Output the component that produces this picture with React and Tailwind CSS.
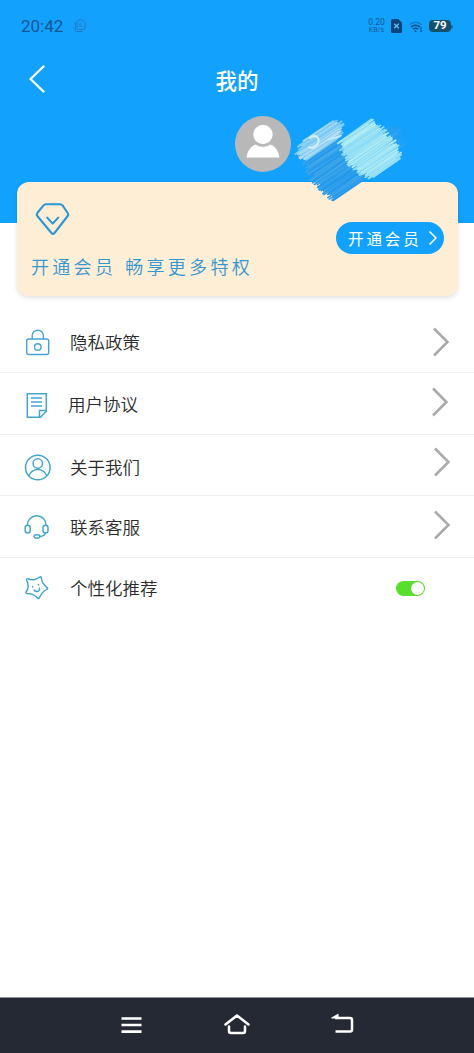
import React from "react";

const MENU = [
  { label: "隐私政策", icon: LockIcon,    row: "h-[62px] border-b", iconBox: "ml-6 mt-[2px]",      text: "mt-px",      arrow: "mr-[24px] mt-px" },
  { label: "用户协议", icon: DocIcon,     row: "h-[62px] border-b", iconBox: "ml-[22px] mt-[3px]", text: "mt-[2px]",   arrow: "mr-[25px] mb-[4px]" },
  { label: "关于我们", icon: UserIcon,    row: "h-[61px] border-b", iconBox: "ml-6 mt-[4px]",      text: "mt-[4px]",   arrow: "mr-[23px] mb-[6px]" },
  { label: "联系客服", icon: HeadsetIcon, row: "h-[62px] border-b", iconBox: "ml-6 mt-[2px]",      text: "mt-[2px]",   arrow: "mr-[23px] mb-[3px]" },
];

// Hatched brush patches: swept from one point to another, strokes run up to the right
const PATCHES = [
  { from: [320, 148], to: [350, 189], half: 23, ragged: 0.35, count: 62, colors: ["#289bea", "#36a2ea", "#2199ee", "#45a9e9", "#2b9cec"], width: 1.6 },
  { from: [381, 133], to: [393, 152], half: 12, ragged: 0.7,  count: 18, colors: ["#32a8ee", "#259fee", "#2ba4f1"], width: 1.5 },
  { from: [317, 132], to: [323, 148], half: 25, ragged: 0.3,  count: 22, colors: ["#8bd2f5", "#a6dcf5", "#7fcaf5", "#b9dff0"], width: 1.7 },
  { from: [355, 131], to: [385, 169], half: 21, ragged: 0.4,  count: 66, colors: ["#a0e5f5", "#8bdcf7", "#b3edf4", "#98e1f5"], width: 1.7 },
];

const noise = (n) => {
  const v = Math.sin(n * 127.1) * 43758.5453;
  return v - Math.floor(v);
};

export default function App() {
  return (
    <div className="relative flex h-[1053px] w-[474px] flex-col overflow-hidden bg-white font-['Noto_Sans_CJK_SC','Noto_Sans',sans-serif]">
      {/* Header */}
      <header className="h-[223px] shrink-0 bg-[#12a2fd]">
        <StatusBar />
        <div className="grid h-[56px] grid-cols-3 items-center">
          <svg className="-mt-[4px] ml-[28px]" width="18" height="30" viewBox="0 0 18 30" fill="none" stroke="#fff" strokeWidth="2.3" strokeLinecap="round" strokeLinejoin="round">
            <path d="M15.500 2.500 2.500 15l13 12.500" />
          </svg>
          <h1 className="-mt-[3px] text-center text-[21.5px] font-medium leading-8 text-white">我的</h1>
        </div>
        <div className="ml-[235px] mt-[7px] h-14 w-14 overflow-hidden rounded-full bg-[#b8b8b8]">
          <svg width="56" height="56" viewBox="0 0 56 56" fill="#fff">
            <path d="M11.500 41.500c1-7 4.500-11.400 9-13a13 13 0 0 0 15 0c4.500 1.600 8 6 9 13z" />
            <circle cx="28" cy="18.500" r="9.700" />
          </svg>
        </div>
      </header>

      {/* Membership card */}
      <section className="mx-[16.5px] -mt-[41px] flex h-[114px] shrink-0 justify-between rounded-xl bg-[#feeed6] shadow-[0_2px_5px_rgba(0,0,0,0.12)]">
        <div className="pl-[14.5px] pt-[20px]">
          <svg className="ml-1" width="36" height="34" viewBox="0 0 36 34" fill="none" stroke="#2f96d6" strokeWidth="2.1" strokeLinejoin="round" strokeLinecap="round">
            <path d="M11 2.200h14q1.600 0 2.500 1.200l5.200 7.600q1 1.500 0 3L19.500 31q-1.500 1.700-3 0L2.300 14q-1-1.500 0-3l6.200-7.600Q9.400 2.200 11 2.200z" />
            <path d="M12.200 15.600l5.500 6 5.500-6" />
          </svg>
          <p className="mt-[16px] whitespace-pre text-[18px] font-[350] leading-[28px] tracking-[3.3px] text-[#3697cf]">开通会员<span className="inline-block w-[9px]"> </span>畅享更多特权</p>
        </div>
        <button className="mr-[13.5px] mt-[40px] flex h-8 w-[108px] items-center rounded-full bg-[#12a2fd] pl-[12px] text-white">
          <span className="whitespace-nowrap text-[15.5px] leading-8 tracking-[2.9px]">开通会员</span>
          <svg className="ml-[6px] shrink-0" width="10" height="16" viewBox="0 0 10 16" fill="none" stroke="#fff" strokeWidth="1.500">
            <path d="M1.500 1.500 8 8l-6.500 6.500" />
          </svg>
        </button>
      </section>

      {/* Menu */}
      <ul className="mt-[15px] flex-1 text-[17.5px] font-[350] text-[#2b2b2b]">
        {MENU.map(({ label, icon: Icon, row, iconBox, text, arrow }) => (
          <li key={label} className={`flex items-center border-[#f0f0f0] ${row}`}>
            <span className={`flex w-[46px] shrink-0 ${iconBox}`}><Icon /></span>
            <span className={`flex-1 ${text}`}>{label}</span>
            <svg className={arrow} width="18" height="30" viewBox="0 0 18 30" fill="none" stroke="#aaa" strokeWidth="2.500">
              <path d="M2 1.500 15.500 15 2 28.500" />
            </svg>
          </li>
        ))}
        <li className="flex h-[61px] items-center">
          <span className="ml-6 flex w-[46px] shrink-0"><StarIcon /></span>
          <span className="flex-1">个性化推荐</span>
          <span className="mr-[49px] flex h-[15px] w-[29px] items-center justify-end rounded-full bg-[#58df2d] pr-px">
            <span className="h-[13px] w-[13px] rounded-full bg-white" />
          </span>
        </li>
      </ul>

      {/* System navigation */}
      <nav className="flex h-14 shrink-0 items-center justify-between border-t border-[#8f9097] bg-[#252934] px-[119px] pb-[2px]">
        <svg width="24" height="24" viewBox="0 0 24 24" fill="none" stroke="#fff" strokeWidth="2.700">
          <path d="M2.500 5.500h20M2.500 12h20M2.500 18.700h20" />
        </svg>
        <svg width="28" height="24" viewBox="0 0 28 24" fill="none" stroke="#fff" strokeWidth="2.500" strokeLinecap="round" strokeLinejoin="round">
          <path d="M2.500 11.500 14 2.500l11.500 9M6 13.500V18q0 2 2 2h12q2 0 2-2v-4.500" />
        </svg>
        <svg width="24" height="24" viewBox="0 0 24 24" fill="none" stroke="#fff" strokeWidth="2.500">
          <path d="M4 5h15q2 0 2 2v9.500q0 2-2 2H4.500" />
          <path d="M.8 5 7 1.500V5z" fill="#fff" strokeWidth="1.200" strokeLinejoin="round" />
        </svg>
      </nav>

      <Scribble />
    </div>
  );
}

function StatusBar() {
  return (
    <div className="flex h-[53px] items-center text-[#145795]">
      <span className="-mt-px ml-[21px] w-[53px] font-['Roboto',sans-serif] text-[17px] leading-5">20:42</span>
      <svg className="-mt-px" width="12" height="14" viewBox="0 0 12 14" fill="none" stroke="#2478bf" strokeWidth="1">
        <path d="M3 2.500Q3 1 4.500 1h4L11 3.500V9q0 1.500-1.500 1.500h-5Q3 10.500 3 9z" />
        <path d="M1.200 3v8q0 1.500 1.500 1.500H9" />
        <path d="M5 7h4M5 5h2" />
      </svg>
      <div className="ml-auto mr-[6px] flex w-[17px] flex-col items-center font-['Roboto',sans-serif] text-[8.5px] leading-[7.500px]">
        <div>0.20</div>
        <div className="text-[7px]">KB/s</div>
      </div>
      <svg className="-mt-px mr-[7px]" width="11" height="14" viewBox="0 0 11 14">
        <path d="M1.500 0H7l4 3.500v9q0 1.500-1.500 1.500h-8Q0 14 0 12.500v-11Q0 0 1.500 0z" fill="#0b457b" />
        <path d="M3.200 4.700l4.600 4.600m0-4.600L3.200 9.300" stroke="#6bbcf5" strokeWidth="1.300" />
      </svg>
      <svg className="mr-[6px]" width="14" height="12" viewBox="0 0 14 12" fill="none" stroke="#0d4f89">
        <path d="M.6 3.700q5.900-4.600 11.800 0" stroke="#1778c2" strokeWidth="1.300" />
        <path d="M2 6q4.500-3.500 9 0M4 8.200q2.500-1.800 5 0" strokeWidth="1.600" />
        <circle cx="6.500" cy="10.300" r="1" fill="#0d4f89" stroke="none" />
        <path d="M12 6.500v2M12 9.300v1.800" strokeWidth="1.400" />
      </svg>
      <div className="-mt-px flex h-3 w-[22px] items-center justify-center rounded-[4px] bg-[#15506f] font-['Roboto',sans-serif] text-[11.500px] font-bold text-white">79</div>
      <div className="mr-[21px] h-1 w-[2px] rounded-r bg-[#1a679a]" />
    </div>
  );
}

function Scribble() {
  return (
    <svg className="pointer-events-none absolute left-[285px] top-[110px]" width="130" height="100" viewBox="285 110 130 100" fill="none" strokeLinecap="round">
      {PATCHES.map((p, k) =>
        Array.from({ length: p.count }, (_, i) => {
          const t = i / (p.count - 1);
          const seed = i + k * 97;
          const cx = p.from[0] + (p.to[0] - p.from[0]) * t;
          const cy = p.from[1] + (p.to[1] - p.from[1]) * t;
          const taper = 0.62 + 0.28 * Math.sin(Math.PI * t);
          const a = p.half * (taper + noise(seed) * p.ragged);
          const b = p.half * (taper + noise(seed + 31) * p.ragged);
          const tilt = 0.62 + noise(seed + 53) * 0.1;
          return (
            <path
              key={`${k}-${i}`}
              d={`M${cx - a * 0.82} ${cy + a * 0.82 * tilt}L${cx + b * 0.82} ${cy - b * 0.82 * tilt}`}
              stroke={p.colors[Math.floor(noise(seed + 7) * p.colors.length)]}
              strokeWidth={p.width}
            />
          );
        })
      )}
      <path d="M310 138q5-4 8 0 2 4-2 8-4 3-7 1" stroke="#d6f1fb" strokeWidth="1.800" />
      <path d="M328 140l12-4" stroke="#c5ebfa" strokeWidth="1.500" />
    </svg>
  );
}

function LockIcon() {
  return (
    <svg width="27" height="27" viewBox="0 0 27 27" fill="none" stroke="#44a5d3" strokeWidth="1.400">
      <rect x="2.700" y="10" width="22" height="15.500" rx="2" />
      <path d="M8.200 10V6.800a5.600 5.600 0 0 1 11.200 0V10" />
      <circle cx="13.800" cy="18" r="3.300" />
    </svg>
  );
}

function DocIcon() {
  return (
    <svg className="ml-px" width="27" height="27" viewBox="0 0 27 27" fill="none" stroke="#44a5d3" strokeWidth="1.500">
      <path d="M4.300 1.800h19v17.500l-5.800 6H4.300z" />
      <path d="M16.500 25v-6.500h6.500M8 6h11M8 10h11M8 14h11" />
    </svg>
  );
}

function UserIcon() {
  return (
    <svg width="27" height="27" viewBox="0 0 27 27" fill="none" stroke="#44a5d3" strokeWidth="1.500">
      <circle cx="13.800" cy="13.500" r="12.300" />
      <circle cx="13.800" cy="9.500" r="4.700" />
      <path d="M4.800 21.700q2.700-6.200 9-6.200t9 6.200" />
    </svg>
  );
}

function HeadsetIcon() {
  return (
    <svg width="27" height="27" viewBox="0 0 27 27" fill="none" stroke="#44a5d3" strokeWidth="1.500">
      <path d="M3.300 11.500v-.3a9.400 9.400 0 0 1 18.800 0v.3" />
      <rect x="1.200" y="11.200" width="5" height="7.800" rx="2.500" />
      <rect x="19" y="11.200" width="5" height="7.800" rx="2.500" />
      <path d="M21.500 19q-1 3-5.500 3.500" />
      <ellipse cx="13" cy="22.500" rx="2.900" ry="1.700" />
    </svg>
  );
}

function StarIcon() {
  return (
    <svg width="27" height="27" viewBox="0 0 27 27" fill="none" stroke="#44a5d3" strokeWidth="1.500" strokeLinejoin="round">
      <path d="M4 3.800Q7 5.200 10 4.700 13 4 15.800 2q1.400-.5 1.600 1 .2 3 1.600 5.200 1.700 2.500 4.200 4.400 1 1-.3 1.800-2.700 1-4.400 3.200-1.700 2.400-3.300 5.400-.8 1-1.700.1-2.200-2.500-4.700-3.500-3-1.100-5.900-1.200-1.400-.3-.8-1.600Q4 14.500 4.200 11.500 4 8 2.600 5q-.3-1.300 1.400-1.200z" />
      <path d="M10.200 15q1.700 2.500 4.300.8 1.300-1 1-2.500M8.500 11.500v.6M14.500 9.500v.6" strokeLinecap="round" />
    </svg>
  );
}
